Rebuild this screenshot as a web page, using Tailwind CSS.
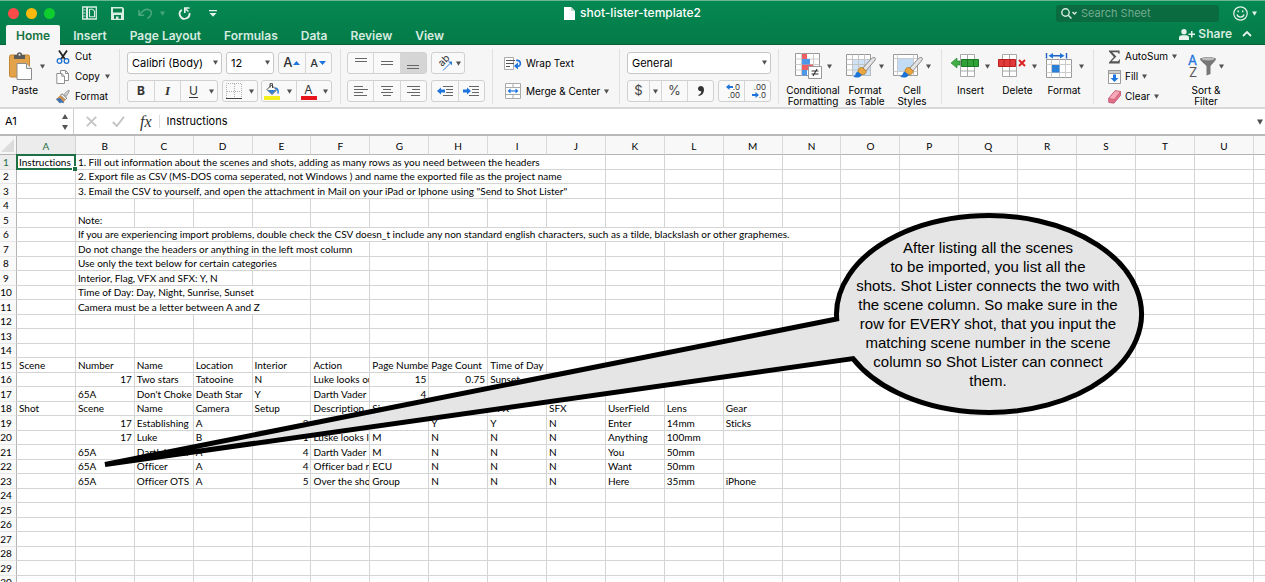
<!DOCTYPE html>
<html lang="en">
<head>
<meta charset="utf-8">
<title>shot-lister-template2</title>
<script src="https://cdn.jsdelivr.net/npm/@tailwindcss/browser@4"></script>
</head>
<body class="relative flex h-screen flex-col overflow-hidden bg-white font-[Inter,sans-serif] text-[10px] text-black">
<svg class="hidden">
  <symbol id="dn" viewBox="0 0 5 5"><path d="M0 .5h5L2.500 4.800z" fill="#505050"/></symbol>
  <symbol id="brush" viewBox="0 0 24 22"><path d="M23 .8c-1-.9-2.300-.2-3.500.8L10.800 11l3 3L22.300 4c.9-1.200 1.500-2.300.7-3.200z" fill="#e4e4e4" stroke="#7a7a7a" stroke-width=".9"/><path d="M10.800 10.800c-2-.8-4 .2-4.500 2l-.6 3 3 2.200 3.200-.7c2-.6 2.800-2.500 1.900-3.700z" fill="#eaa63c" stroke="#a8701c" stroke-width=".7"/><path d="M6 14.800c-1.500 0-2 1.200-2.400 2.400-.5 1.300-1.500 2-2.600 2.300 2.500 1.700 7.500 1.500 8.800-1.800z" fill="#1c74d8"/></symbol>
</svg>

<header class="flex h-[45px] shrink-0 flex-col border-t border-b border-t-[#6bb592] border-b-[#0a5f36] bg-linear-to-b from-[#048852] to-[#057a47] text-white">
  <div class="grid h-6 shrink-0 grid-cols-[1fr_auto_1fr] items-center">
    <div class="flex items-center pl-2">
      <div class="flex gap-[7px]">
        <button aria-label="Close" class="size-[11px] rounded-full bg-[#fc4b48]"></button>
        <button aria-label="Minimize" class="size-[11px] rounded-full bg-[#fdb90d]"></button>
        <button aria-label="Zoom" class="size-[11px] rounded-full bg-[#0fcd2f]"></button>
      </div>
      <button aria-label="Workbook gallery" class="ml-[27px]"><svg class="h-[14px] w-[15px]" viewBox="0 0 15 14" fill="none" stroke="#d9ede3" stroke-width="1.300"><path d="M.7 1h13.600v12H.7z"/><path d="M5 1v12" stroke-width="2"/><path d="M1.500 4h2M1.500 7h2M1.500 10h2" stroke-width="1"/><path d="M7.500 3.200h3l2 2v5.600h-5z" stroke-width="1.100"/></svg></button>
      <button aria-label="Save" class="ml-[14px]"><svg class="size-[13px]" viewBox="0 0 13 13"><path d="M0 0h11.500L13 1.500V13H0z" fill="#d9ede3"/><path d="M2 1.500h9v4H2zM3 8h7v3.800H7.500V9.500H5v2.300H3z" fill="#067f4b"/></svg></button>
      <button aria-label="Undo" class="ml-[14px] flex items-center gap-[7px]"><svg class="h-[11px] w-[15px]" viewBox="0 0 15 11" fill="none" stroke="#4aa67d" stroke-width="1.600"><path d="M1 2v5.200h5.200M1.500 6.800C5 2 8.500.5 11.500 2c3 1.800 2.500 5.500-2 8.500"/></svg><svg class="size-[5px]" viewBox="0 0 5 5"><path d="M0 .5h5L2.500 4.800z" fill="#4aa67d"/></svg></button>
      <button aria-label="Redo" class="ml-[13px]"><svg class="size-[13px]" viewBox="0 0 13 13" fill="none" stroke="#e6f3ec" stroke-width="1.800"><path d="M3.800 2.800A4.900 4.900 0 1 0 11.400 6"/><path d="M11.500 1H6.800v5" stroke-width="1.700"/><path d="M7 1.500l3.500 3" stroke-width="1.500"/></svg></button>
      <button aria-label="Customize toolbar" class="ml-[18px]"><svg class="h-[7px] w-2" viewBox="0 0 8 7"><path d="M0 0h8v1.300H0zM.5 3h7L4 6.800z" fill="#e6f3ec"/></svg></button>
    </div>
    <h1 class="flex items-center gap-[5px] text-xs font-medium"><svg class="h-[13px] w-[11px]" viewBox="0 0 11 13"><path d="M0 0h7l4 4v9H0z" fill="#fff"/><path d="M7 0v4h4" fill="#bcd8ca"/></svg>shot-lister-template2</h1>
    <div class="flex items-center justify-end pr-2">
      <label class="flex h-[17px] w-[163px] items-center gap-1 rounded-[3px] bg-[#0a6b41] pl-[5px]"><svg class="h-[11px] w-4 shrink-0" viewBox="0 0 16 11" fill="none" stroke="#d9ede3" stroke-width="1.400"><circle cx="4.500" cy="4.500" r="3.700"/><path d="M7.200 7.200l3.300 3.300M11.500 4l2 2 2-2" /></svg><input type="search" aria-label="Search Sheet" placeholder="Search Sheet" class="min-w-0 flex-1 bg-transparent text-[11px] outline-none placeholder:text-[#73ac90]"></label>
      <button aria-label="Feedback" class="ml-[14px] flex items-center gap-1"><svg class="size-[15px]" viewBox="0 0 15 15" fill="none" stroke="#e6f3ec" stroke-width="1.200"><circle cx="7.500" cy="7.500" r="6.700"/><path d="M4 8.500c.8 3.400 6.200 3.400 7 0"/><path d="M5.300 4.500v1.800M9.700 4.500v1.800" stroke-width="1.500"/></svg><svg class="size-[5px]" viewBox="0 0 5 5"><path d="M0 .5h5L2.500 4.800z" fill="#e6f3ec"/></svg></button>
    </div>
  </div>
  <div class="flex flex-1 items-stretch justify-between text-[12px] font-semibold text-[#d6ebe0]">
    <nav class="flex items-center gap-[23px] pl-[6px]">
      <a href="#" class="-mr-[10px] flex h-full items-center rounded-t-[2px] bg-[#f6f6f6] px-[10px] text-[#17723f]">Home</a>
      <a href="#">Insert</a><a href="#">Page Layout</a><a href="#">Formulas</a><a href="#">Data</a><a href="#">Review</a><a href="#">View</a>
    </nav>
    <div class="flex items-center pr-[13px] pb-1">
      <button class="flex items-center gap-[3px]"><svg class="h-[11px] w-4" viewBox="0 0 16 11" fill="#e6f3ec"><circle cx="5" cy="2.800" r="2.700"/><path d="M0 11V8.500C0 7 1.500 6.200 3 6.200h4c1.500 0 3 .8 3 2.300V11z"/><path d="M12 2h1.500v2.500H16V6h-2.500v2.500H12V6H9.500V4.500H12z"/></svg>Share</button>
      <button aria-label="Collapse ribbon" class="ml-[10px]"><svg class="h-[6px] w-[10px]" viewBox="0 0 10 6" fill="none" stroke="#e6f3ec" stroke-width="1.800"><path d="M1 5l4-4 4 4"/></svg></button>
    </div>
  </div>
</header>

<section aria-label="Ribbon" class="flex h-16 shrink-0 border-b-2 border-[#d9d9d9] bg-[#f6f6f6] pt-[4px] pb-[3px]">
  <div class="flex w-[120px] shrink-0 border-r border-[#e0e0e0]">
    <button class="flex w-[50px] flex-col items-center gap-[5px] pt-[3px] leading-[11px]">
      <span class="flex items-center gap-[7px] pl-1"><svg class="h-7 w-6" viewBox="0 0 24 28"><rect x=".5" y="3" width="20" height="22" rx="1.500" fill="#e3a34a" stroke="#c48632"/><path d="M5 3h2.800c0-3.800 5.400-3.800 5.400 0H16v4H5z" fill="#5b5b5b"/><circle cx="10.500" cy="2.700" r="1" fill="#eee"/><path d="M8 11.500h9.500l5 5v11H8z" fill="#fff" stroke="#8c8c8c"/><path d="M17.500 11.500v5h5" fill="#e8e8e8" stroke="#8c8c8c"/></svg><svg class="size-[5px]"><use href="#dn"/></svg></span>
      Paste
    </button>
    <div class="flex flex-col justify-between pl-[6px]">
      <button class="flex h-[15px] items-center gap-[5px]"><svg class="size-[14px]" viewBox="0 0 14 14" fill="none"><path d="M3 .5l6 8.800M11 .5L5 9.300" stroke="#222" stroke-width="1.800"/><circle cx="3.500" cy="11" r="2.300" stroke="#1d6fd1" stroke-width="1.300"/><circle cx="10.500" cy="11" r="2.300" stroke="#1d6fd1" stroke-width="1.300"/></svg>Cut</button>
      <button class="flex h-[15px] items-center gap-[5px]"><svg class="size-[14px]" viewBox="0 0 14 14" fill="#fff" stroke="#8f8f8f"><path d="M4.500.5h5l3 3v7h-8z"/><path d="M.8 3.500h5l2.700 2.700v7.300H.8z"/><path d="M5.800 3.500v2.700h2.700M9.500.5v3h3" fill="none"/></svg>Copy<svg class="size-[5px]"><use href="#dn"/></svg></button>
      <button class="flex h-[15px] items-center gap-[5px]"><svg class="size-[14px]" viewBox="0 0 14 14"><path d="M13.500.8L12 .3 8 4.500l2.200 2z" fill="#d8d8d8" stroke="#777" stroke-width=".7"/><path d="M6 3.800l4.800 4.400-1.500 1.500L4.500 5.300z" fill="#fff" stroke="#555" stroke-width=".8"/><path d="M4.500 5.300l4.800 4.400-2 3.300L5 12.200 3.500 13 0 9z" fill="#d0904a"/><path d="M0 9l4-1 3.800 4-.5 1.300-2.300-1L4 13.500z" fill="#3a75b8"/></svg>Format</button>
    </div>
  </div>

  <div class="flex w-[221px] shrink-0 flex-col justify-between border-r border-[#e0e0e0] pt-[3px] pr-2 pb-[2px] pl-[7px]">
    <div class="flex h-[22px] gap-1">
      <div class="relative w-[95px]"><select aria-label="Font" class="h-full w-full appearance-none rounded-[3px] border border-[#c6c6c6] bg-white px-1 text-[11px]"><option>Calibri (Body)</option></select><svg class="pointer-events-none absolute top-2 right-1 size-[5px]"><use href="#dn"/></svg></div>
      <div class="relative w-12"><select aria-label="Font size" class="h-full w-full appearance-none rounded-[3px] border border-[#c6c6c6] bg-white px-1 text-[11px]"><option>12</option></select><svg class="pointer-events-none absolute top-2 right-1 size-[5px]"><use href="#dn"/></svg></div>
      <div class="flex flex-1 divide-x divide-[#d6d6d6] rounded-[3px] border border-[#d0d0d0] bg-[#f9f9f9] font-medium text-[#333]">
        <button aria-label="Increase font size" class="flex flex-1 items-center justify-center gap-px text-[13px]">A<svg class="h-[4px] w-[7px]" viewBox="0 0 6 4" preserveAspectRatio="none"><path d="M0 4h6L3 0z" fill="#1d74dc"/></svg></button>
        <button aria-label="Decrease font size" class="flex flex-1 items-center justify-center gap-px text-[11px]">A<svg class="h-[4px] w-[7px]" viewBox="0 0 6 4" preserveAspectRatio="none"><path d="M0 0h6L3 4z" fill="#1d74dc"/></svg></button>
      </div>
    </div>
    <div class="flex h-[22px] justify-between">
      <div class="flex w-[91px] divide-x divide-[#d6d6d6] rounded-[3px] border border-[#d0d0d0] bg-[#f9f9f9] text-[12px] text-[#333]">
        <button class="w-[27px] font-bold">B</button>
        <button class="w-[26px] font-[Liberation_Serif,serif] text-[13px] font-bold italic">I</button>
        <button class="flex flex-1 items-center justify-between pr-[3px] pl-2"><span class="underline underline-offset-2">U</span><svg class="size-[5px]"><use href="#dn"/></svg></button>
      </div>
      <div class="flex w-[36px] rounded-[3px] border border-[#d0d0d0] bg-[#f9f9f9]">
        <button aria-label="Borders" class="flex flex-1 items-center justify-between pr-[3px] pl-[3px]"><svg class="size-4" viewBox="0 0 16 16" fill="none" stroke="#b0b0b0"><path d="M.5 15V.5h15V15M8.500 1v14M1 8.500h14" stroke-dasharray="1 1"/><path d="M0 15.500h16" stroke="#444"/></svg><svg class="size-[5px]"><use href="#dn"/></svg></button>
      </div>
      <div class="flex w-[71px] divide-x divide-[#d6d6d6] rounded-[3px] border border-[#d0d0d0] bg-[#f9f9f9]">
        <button aria-label="Fill color" class="flex flex-1 items-center justify-between pr-1 pl-[2px]"><svg class="h-[17px] w-4" viewBox="0 0 16 17"><path d="M0 13h16v4H0z" fill="#f4ee1c"/><path d="M3 6.500L7.500 2l5 5-4.500 4.500z" fill="#fff" stroke="#444"/><path d="M3.500 7h8.500L8 11z" fill="#2b7fd6"/><path d="M6 4.500V.7h2.500V5" fill="none" stroke="#444"/><path d="M11 5c2.500 0 3.500 2 3 5.500" fill="none" stroke="#2b7fd6" stroke-width="1.500"/></svg><svg class="size-[5px]"><use href="#dn"/></svg></button>
        <button aria-label="Font color" class="flex flex-1 items-center justify-between pr-[3px] pl-[4px]"><span class="flex w-4 flex-col items-center text-[12px] leading-[13px] text-[#333]">A<span class="h-[4px] w-4 bg-[#e8141c]"></span></span><svg class="size-[5px]"><use href="#dn"/></svg></button>
      </div>
    </div>
  </div>

  <div class="flex w-[152px] shrink-0 flex-col justify-between border-r border-[#e0e0e0] pt-[3px] pb-[2px] pl-[6px]">
    <div class="flex h-[22px] gap-1">
      <div class="flex w-20 divide-x divide-[#d6d6d6] rounded-[3px] border border-[#d0d0d0] bg-[#f9f9f9]">
        <button aria-label="Top align" class="flex flex-1 items-center justify-center"><svg class="h-[14px] w-3" viewBox="0 0 12 14" stroke="#666"><path d="M0 2.500h12M0 5.500h12"/></svg></button>
        <button aria-label="Middle align" class="flex flex-1 items-center justify-center"><svg class="h-[14px] w-3" viewBox="0 0 12 14" stroke="#666"><path d="M0 5.500h12M0 8.500h12"/></svg></button>
        <button aria-label="Bottom align" aria-pressed="true" class="flex flex-1 items-center justify-center bg-[#d5d5d5]"><svg class="h-[14px] w-3" viewBox="0 0 12 14" stroke="#666"><path d="M0 9.500h12M0 12.500h12"/></svg></button>
      </div>
      <button aria-label="Orientation" class="flex w-[34px] items-center justify-between rounded-[3px] border border-[#d0d0d0] bg-[#f9f9f9] pr-[3px] pl-[5px]"><svg class="size-[16px] overflow-visible" viewBox="0 0 16 16"><text x="0" y="0" transform="translate(5 12) rotate(-45)" font-size="10" font-family="Inter" fill="#333">ab</text><path d="M6 15.500l7-7" stroke="#2b7fd6"/><path d="M15 6.500v4l-4-4z" fill="#2b7fd6"/></svg><svg class="size-[5px]"><use href="#dn"/></svg></button>
    </div>
    <div class="flex h-[22px] gap-1">
      <div class="flex w-20 divide-x divide-[#d6d6d6] rounded-[3px] border border-[#d0d0d0] bg-[#f9f9f9]">
        <button aria-label="Align left" class="flex flex-1 items-center justify-center"><svg class="h-[10px] w-[14px]" viewBox="0 0 14 10" stroke="#666"><path d="M0 .5h9M0 3.500h14M0 6.500h9M0 9.500h13"/></svg></button>
        <button aria-label="Center" class="flex flex-1 items-center justify-center"><svg class="h-[10px] w-[14px]" viewBox="0 0 14 10" stroke="#666"><path d="M1 .5h12M3 3.500h8M1 6.500h12M3 9.500h8"/></svg></button>
        <button aria-label="Align right" class="flex flex-1 items-center justify-center"><svg class="h-[10px] w-[14px]" viewBox="0 0 14 10" stroke="#666"><path d="M1 .5h13M6 3.500h8M1 6.500h13M5 9.500h9"/></svg></button>
      </div>
      <div class="flex w-[54px] divide-x divide-[#d6d6d6] rounded-[3px] border border-[#d0d0d0] bg-[#f9f9f9]">
        <button aria-label="Decrease indent" class="flex flex-1 items-center justify-center"><svg class="h-[10px] w-4" viewBox="0 0 16 10" stroke="#666"><path d="M6 .5h10M9 3.500h7M9 6.500h7M6 9.500h10"/><path d="M0 5l4-3.500v2h4v3H4v2z" fill="#1d74dc" stroke="none"/></svg></button>
        <button aria-label="Increase indent" class="flex flex-1 items-center justify-center"><svg class="h-[10px] w-4" viewBox="0 0 16 10" stroke="#666"><path d="M6 .5h10M9 3.500h7M9 6.500h7M6 9.500h10"/><path d="M8 5L4 1.500v2H0v3h4v2z" fill="#1d74dc" stroke="none"/></svg></button>
      </div>
    </div>
  </div>

  <div class="flex w-[127px] shrink-0 flex-col justify-between border-r border-[#e0e0e0] pt-[6px] pb-[5px] pl-[11px]">
    <button class="flex h-4 items-center gap-1"><svg class="h-[13px] w-[18px]" viewBox="0 0 18 13" fill="none"><path d="M.5 12.500V.5h9v12z" fill="#fff" stroke="#aaa"/><path d="M2 3.500h9M2 6.500h8M2 9.500h4" stroke="#555"/><path d="M12 3.500c5-1 6 5.500 1.500 6" stroke="#1d74dc" stroke-width="1.600"/><path d="M10 9l4-3.500v7z" fill="#1d74dc"/></svg>Wrap Text</button>
    <button class="flex h-4 items-center gap-1 whitespace-nowrap"><svg class="h-4 w-[18px]" viewBox="0 0 18 16" fill="#fff" stroke="#aaa"><path d="M1.500.5h15v15h-15zM1.500 4.500h15M1.500 11.500h15M9 .5v4M9 11.500v4"/><path d="M5 8h8" stroke="#1d74dc" stroke-width="1.200"/><path d="M3.500 8l3-2.500v5zM14.500 8l-3-2.500v5z" fill="#1d74dc" stroke="none"/></svg>Merge &amp; Center<svg class="size-[5px] shrink-0"><use href="#dn"/></svg></button>
  </div>

  <div class="flex w-[159px] shrink-0 flex-col justify-between border-r border-[#e0e0e0] pt-[3px] pr-[7px] pb-[2px] pl-[7px]">
    <div class="relative h-[22px]"><select aria-label="Number format" class="h-full w-full appearance-none rounded-[3px] border border-[#c6c6c6] bg-white px-1 text-[11px]"><option>General</option></select><svg class="pointer-events-none absolute top-2 right-1 size-[5px]"><use href="#dn"/></svg></div>
    <div class="flex h-[22px] justify-between">
      <div class="flex w-[87px] divide-x divide-[#d6d6d6] rounded-[3px] border border-[#d0d0d0] bg-[#f9f9f9] text-[13px] text-[#444]">
        <button aria-label="Currency" class="w-[22px]">$</button><button aria-label="Currency options" class="flex w-3 items-center justify-center"><svg class="size-[5px]"><use href="#dn"/></svg></button><button class="flex-1">%</button><button aria-label="Comma style" class="flex flex-1 items-center justify-center"><svg class="h-[10px] w-[6px]" viewBox="0 0 6 10"><path d="M0 2.500C0-.8 6-1 6 3.500 6 7 4 9.500.5 10v-1C2.500 8.200 3.300 7 3.200 5.200 1.500 5.500 0 4.500 0 2.500z" fill="#333"/></svg></button>
      </div>
      <div class="flex w-[53px] divide-x divide-[#d6d6d6] rounded-[3px] border border-[#d0d0d0] bg-[#f9f9f9] text-[8px] leading-[8px] text-[#333]">
        <button aria-label="Increase decimal" class="flex flex-1 flex-col items-end justify-center pr-1"><span class="flex items-center"><svg class="h-[6px] w-[7px]" viewBox="0 0 7 6"><path d="M0 3l3.500-3v2H7v2H3.500v2z" fill="#1d74dc"/></svg>.0</span><span>.00</span></button>
        <button aria-label="Decrease decimal" class="flex flex-1 flex-col items-end justify-center pr-1"><span>.00</span><span class="flex items-center"><svg class="h-[6px] w-[7px]" viewBox="0 0 7 6"><path d="M7 3L3.500 0v2H0v2h3.500v2z" fill="#1d74dc"/></svg>.0</span></button>
      </div>
    </div>
  </div>

  <div class="flex w-[163px] shrink-0 border-r border-[#e0e0e0] pt-1 pl-[5px] leading-[11px]">
    <button class="flex w-[58px] flex-col items-center gap-[6px]">
      <span class="flex items-center gap-1"><svg class="h-[26px] w-7" viewBox="0 0 28 26"><path d="M.5.5h24v22H.5z" fill="#fff" stroke="#999"/><path d="M6.500.5v22M18.500.5v22M.5 6h24M.5 11.500h24M.5 17h24" stroke="#ccc"/><path d="M7 1h5v5H7zM7 11.500h11V17H7z" fill="#ee5f64"/><path d="M7 6h8v5.500H7zM7 17h5v5.500H7z" fill="#4b98e8"/><path d="M13.500 13.500h13v12h-13z" fill="#fff" stroke="#999"/><path d="M16.500 18h7M16.500 21h7M22 16l-4 7" stroke="#333" stroke-width="1.100"/></svg><svg class="size-[5px]"><use href="#dn"/></svg></span>
      <span>Conditional<br>Formatting</span>
    </button>
    <button class="flex w-[46px] flex-col items-center gap-[6px]">
      <span class="flex items-center gap-[3px]"><svg class="h-[26px] w-[30px]" viewBox="0 0 30 26"><path d="M.5 1.500h24v21H.5z" fill="#fff" stroke="#999"/><path d="M7 7h17.500v15.500H7z" fill="#cfe2f6"/><path d="M6.500 1.500v21M12.500 1.500v21M18.500 1.500v21M.5 6.500h24M.5 11.500h24M.5 17h24" stroke="#c4c4c4"/><use href="#brush" x="6" y="4" width="24" height="22"/></svg><svg class="size-[5px]"><use href="#dn"/></svg></span>
      <span>Format<br>as Table</span>
    </button>
    <button class="flex w-[48px] flex-col items-center gap-[6px]">
      <span class="flex items-center gap-[3px]"><svg class="h-[26px] w-[30px]" viewBox="0 0 30 26"><path d="M.5 1.500h24v21H.5z" fill="#fff" stroke="#999"/><path d="M4.500 1.500v21M20.500 1.500v21M.5 5.500h24M.5 18.500h24" stroke="#ccc"/><path d="M5 6h15v12H5z" fill="#c3dcf6"/><use href="#brush" x="6" y="4" width="24" height="22"/></svg><svg class="size-[5px]"><use href="#dn"/></svg></span>
      <span>Cell<br>Styles</span>
    </button>
  </div>

  <div class="flex w-[152px] shrink-0 border-r border-[#e0e0e0] pt-1 pl-[5px] leading-[11px]">
    <button class="flex w-[47px] flex-col items-center gap-[6px]">
      <span class="flex items-center gap-[6px]"><svg class="h-[26px] w-7" viewBox="0 0 28 26"><path d="M9.500 1.500h14v22h-14zM16.500 1.500v22M9.500 18h14" fill="#fff" stroke="#a9a9a9"/><path d="M10.500 6.500H27.500v7H10.500z" fill="#2fa136" stroke="#1c7a26"/><path d="M16.500 6.500v7M22.500 6.500v7" stroke="#1c7a26"/><path d="M0 10l6-5v3h3v4H6v3z" fill="#3fae46" stroke="#1c7a26" stroke-width=".6"/></svg><svg class="size-[5px]"><use href="#dn"/></svg></span>
      Insert
    </button>
    <button class="flex w-[47px] flex-col items-center gap-[6px]">
      <span class="flex items-center gap-[6px]"><svg class="h-[26px] w-7" viewBox="0 0 28 26"><path d="M4.500 1.500h14v22h-14zM11.500 1.500v22M4.500 18h14" fill="#fff" stroke="#a9a9a9"/><path d="M.5 6.500h17v7H.5z" fill="#e23a3a" stroke="#b81e1e"/><path d="M6 6.500v7M12 6.500v7" stroke="#b81e1e"/><path d="M21 7l6 6M27 7l-6 6" stroke="#d22" stroke-width="2"/></svg><svg class="size-[5px]"><use href="#dn"/></svg></span>
      Delete
    </button>
    <button class="flex w-[46px] flex-col items-center gap-[6px]">
      <span class="flex items-center gap-[6px]"><svg class="h-[26px] w-7" viewBox="0 0 28 26"><path d="M1.500 0v5.500M21.500 0v5.500M6 2.800h11" stroke="#1d5fc4" stroke-width="1.400"/><path d="M3.500 2.800L8 0v5.600zM19.500 2.800L15 0v5.600z" fill="#1d74dc"/><path d="M1.500 6.500h25v18h-25z" fill="#fff" stroke="#999"/><path d="M6.500 6.500v18M14.500 6.500v18M20.500 6.500v18M1.500 11.500h25M1.500 19.500h25" stroke="#ccc"/><path d="M7 12h7.500v7.500H7z" fill="#2b7fd6"/></svg><svg class="size-[5px]"><use href="#dn"/></svg></span>
      Format
    </button>
  </div>

  <div class="flex flex-1 pl-[14px]">
    <div class="flex w-[74px] flex-col justify-between">
      <button class="flex h-[15px] items-center gap-1 whitespace-nowrap"><svg class="h-[14px] w-[13px]" viewBox="0 0 14 14"><path d="M1 0h11.500v3.500h-1C11 2 10.500 1.800 9 1.800H4.500L9 6.500l-5 5.200h5.500c1.500 0 2-.5 2.500-2h1L12.500 14H1v-1.200L6.300 7 1 1.200z" fill="#555"/></svg>AutoSum<svg class="size-[5px] shrink-0"><use href="#dn"/></svg></button>
      <button class="flex h-[15px] items-center gap-1"><svg class="h-[14px] w-[13px]" viewBox="0 0 13 14"><path d="M.5.5h12v13H.5z" fill="#fff" stroke="#999"/><path d="M.5.5h12v3H.5z" fill="#ccc" stroke="#999"/><path d="M5 4.500h3V8h2.500l-4 4-4-4H5z" fill="#1d74dc"/></svg>Fill<svg class="size-[5px]"><use href="#dn"/></svg></button>
      <button class="flex h-[15px] items-center gap-1"><svg class="h-[14px] w-[13px]" viewBox="0 0 13 14"><path d="M.5 8.500L7 .8l5.500.7v4L6 13.200.8 12.500z" fill="#e0708a" stroke="#b8486a" stroke-width=".7"/><path d="M.7 8.500L7 .8l5.500.7L6.300 9.300z" fill="#f6a9b8" stroke="#c04f68" stroke-width=".5"/></svg>Clear<svg class="size-[5px]"><use href="#dn"/></svg></button>
    </div>
    <button class="flex w-[48px] flex-col items-center gap-[6px] pt-1 leading-[11px]">
      <span class="flex items-center gap-[3px]"><svg class="h-[26px] w-7 overflow-visible" viewBox="0 0 28 26"><text x="0" y="12" font-size="13" font-family="Inter" fill="#1d74dc" stroke="#1d74dc" stroke-width=".3">A</text><text x="1" y="24" font-size="13" font-family="Inter" fill="#555">Z</text><path d="M12 6c0-2.500 16-2.500 16 0 0 2-5.500 6-5.500 7.500V21l-4 1.500v-9C18.500 12 12 8 12 6z" fill="#777"/><ellipse cx="20" cy="6" rx="6.500" ry="1.500" fill="#bdbdbd"/></svg><svg class="size-[5px]"><use href="#dn"/></svg></span>
      <span>Sort &amp;<br>Filter</span>
    </button>
  </div>
</section>

<section aria-label="Formula bar" class="flex h-[27px] shrink-0 items-stretch border-b-2 border-[#b9b9b9] bg-white">
  <div class="flex w-[74px] shrink-0 items-center justify-between border-r border-[#cfcfcf] pr-[5px] pl-[5px]">
    <input aria-label="Name box" value="A1" class="w-10 bg-transparent text-[11px] outline-none">
    <svg class="h-4 w-[6px]" viewBox="0 0 6 16" fill="#555"><path d="M0 5h6L3 0zM0 11h6l-3 5z"/></svg>
  </div>
  <div class="flex items-center gap-[15px] pl-3">
    <button aria-label="Cancel"><svg class="size-[11px]" viewBox="0 0 11 11" stroke="#c4c4c4" stroke-width="1.800"><path d="M.8.800l9.400 9.400M10.200.8L.8 10.200"/></svg></button>
    <button aria-label="Enter"><svg class="h-[11px] w-[13px]" viewBox="0 0 13 11" fill="none" stroke="#c4c4c4" stroke-width="1.900"><path d="M.8 6l4 4L12 .8"/></svg></button>
    <button aria-label="Insert function" class="font-[Liberation_Serif,serif] text-[16px] text-[#333] italic">fx</button>
  </div>
  <input aria-label="Formula" value="Instructions" class="my-[6px] ml-[7px] min-w-0 flex-1 border-l border-[#ddd] pl-[7px] text-[11px] outline-none">
  <button aria-label="Expand formula bar" class="pr-[2px]"><svg class="size-[6px]"><use href="#dn"/></svg></button>
</section>

<main class="min-h-0 flex-1 overflow-hidden">
  <table class="w-full table-fixed border-separate border-spacing-0 font-[Lato,sans-serif] text-[10px] leading-[13px] [font-variant-ligatures:none]">
    <thead><tr id="cols" class="h-[19px]"></tr></thead>
    <tbody id="rows"></tbody>
  </table>
</main>

<aside class="pointer-events-none absolute top-0 left-0">
  <svg class="h-[480px] w-[1150px]" viewBox="0 0 1150 480"><path d="M836.700 319A152.500 98.500 0 1 1 853 358.600L105 464.500z" fill="#e5e5e5" stroke="#000" stroke-width="5"/></svg>
  <p class="absolute top-[238px] left-[843px] w-[290px] text-center font-[Liberation_Sans,Arial,sans-serif] text-[15px] leading-[19px]">After listing all the scenes<br>to be imported, you list all the<br>shots. Shot Lister connects the two with<br>the scene column. So make sure in the<br>row for EVERY shot, that you input the<br>matching scene number in the scene<br>column so Shot Lister can connect<br>them.</p>
</aside>

<script>
const LETTERS = 'ABCDEFGHIJKLMNOPQRSTU'.split('');
// Each cell: column letter -> text, or [text, columns it spills over].
const DATA = {
  1: {A: 'Instructions', B: ['1. Fill out information about the scenes and shots, adding as many rows as you need between the headers', 9]},
  2: {B: ['2. Export file as CSV (MS-DOS coma seperated, not Windows ) and name the exported file as the project name', 9]},
  3: {B: ['3. Email the CSV to yourself, and open the attachment in Mail on your iPad or Iphone using "Send to Shot Lister"', 9]},
  5: {B: 'Note:'},
  6: {B: ['If you are experiencing import problems, double check the CSV doesn_t include any non standard english characters, such as a tilde, blackslash or other graphemes.', 13]},
  7: {B: ['Do not change the headers or anything in the left most column', 5]},
  8: {B: ['Use only the text below for certain categories', 4]},
  9: {B: ['Interior, Flag, VFX and SFX: Y, N', 3]},
  10: {B: ['Time of Day: Day, Night, Sunrise, Sunset', 4]},
  11: {B: ['Camera must be a letter between A and Z', 4]},
  15: {A: 'Scene', B: 'Number', C: 'Name', D: 'Location', E: 'Interior', F: 'Action', G: 'Page Number', H: 'Page Count', I: 'Time of Day'},
  16: {B: '17', C: 'Two stars', D: 'Tatooine', E: 'N', F: 'Luke looks out', G: '15', H: '0.75', I: 'Sunset'},
  17: {B: '65A', C: "Don't Choke", D: 'Death Star', E: 'Y', F: 'Darth Vader', G: '4'},
  18: {A: 'Shot', B: 'Scene', C: 'Name', D: 'Camera', E: 'Setup', F: 'Description', G: 'Size', H: 'Flag', I: 'VFX', J: 'SFX', K: 'UserField', L: 'Lens', M: 'Gear'},
  19: {B: '17', C: 'Establishing', D: 'A', E: '2', F: 'Luke', G: 'W', H: 'Y', I: 'Y', J: 'N', K: 'Enter', L: '14mm', M: 'Sticks'},
  20: {B: '17', C: 'Luke', D: 'B', E: '1', F: 'Luske looks left', G: 'M', H: 'N', I: 'N', J: 'N', K: 'Anything', L: '100mm'},
  21: {B: '65A', C: 'Darth Vader', D: 'A', E: '4', F: 'Darth Vader', G: 'M', H: 'N', I: 'N', J: 'N', K: 'You', L: '50mm'},
  22: {B: '65A', C: 'Officer', D: 'A', E: '4', F: 'Officer bad r', G: 'ECU', H: 'N', I: 'N', J: 'N', K: 'Want', L: '50mm'},
  23: {B: '65A', C: 'Officer OTS', D: 'A', E: '5', F: 'Over the shou', G: 'Group', H: 'N', I: 'N', J: 'N', K: 'Here', L: '35mm', M: 'iPhone'},
};
const cell = (tag, cls, text = '', span = 1) => {
  const el = document.createElement(tag);
  el.className = cls;
  if (span > 1) el.colSpan = span;
  el.textContent = text;
  return el;
};
const cols = document.getElementById('cols');
const corner = cell('th', 'w-[17px] border-r border-b border-[#b5b5b5] bg-[#f6f6f6] p-0 align-bottom');
corner.innerHTML = '<svg class="mb-[2px] h-[13px] w-[14px]" viewBox="0 0 14 13"><path d="M14 0v13H1z" fill="#dcdcdc"/></svg>';
cols.append(corner);
LETTERS.forEach(l => cols.append(cell('th', l === 'A'
  ? 'border-r border-b border-r-[#d4d4d4] border-b-[#1d7044] bg-[#ececec] px-0 pt-[2px] pb-0 font-normal text-[#1d7044]'
  : 'border-r border-b border-r-[#d8d8d8] border-b-[#b5b5b5] bg-[#f8f8f8] px-0 pt-[2px] pb-0 font-normal', l)));
cols.append(cell('th', 'w-[11px] border-b border-[#b5b5b5] bg-[#f8f8f8] p-0'));

const body = document.getElementById('rows');
for (let n = 1; n <= 31; n++) {
  const tr = document.createElement('tr');
  tr.className = n % 2 ? 'h-[15px]' : 'h-[14px]';
  tr.append(cell('th', n === 1
    ? 'border-r border-b border-r-[#b5b5b5] border-b-[#e0e0e0] bg-[#ececec] py-0 pr-1 pl-0 font-normal text-[#1d7044]'
    : 'border-r border-b border-r-[#b5b5b5] border-b-[#e6e6e6] bg-[#fafafa] py-0 pr-1 pl-0 font-normal', n));
  const row = DATA[n] || {};
  for (let i = 0; i < LETTERS.length; i++) {
    const v = row[LETTERS[i]];
    const [text, span] = Array.isArray(v) ? v : [v || '', 1];
    const numeric = /^[\d.]+$/.test(text);
    const td = cell('td', numeric
      ? 'overflow-hidden border-r border-b border-[#d4d4d4] py-0 pr-[2px] pl-0 text-right whitespace-nowrap'
      : 'overflow-hidden border-r border-b border-[#d4d4d4] py-0 pr-0 pl-[2px] whitespace-nowrap', text, span);
    if (n === 1 && i === 0) {
      td.className = 'relative border-r border-b border-[#1d7044] py-0 pr-0 pl-[2px] whitespace-nowrap';
      const box = cell('span', 'absolute -inset-px border-2 border-[#1d7044]');
      box.append(cell('span', 'absolute -right-[3px] -bottom-[3px] z-10 size-[5px] border-t border-l border-white bg-[#1d7044]'));
      td.append(box);
    }
    tr.append(td);
    i += span - 1;
  }
  tr.append(cell('td', 'border-b border-[#d4d4d4] p-0'));
  body.append(tr);
}
</script>
</body>
</html>
